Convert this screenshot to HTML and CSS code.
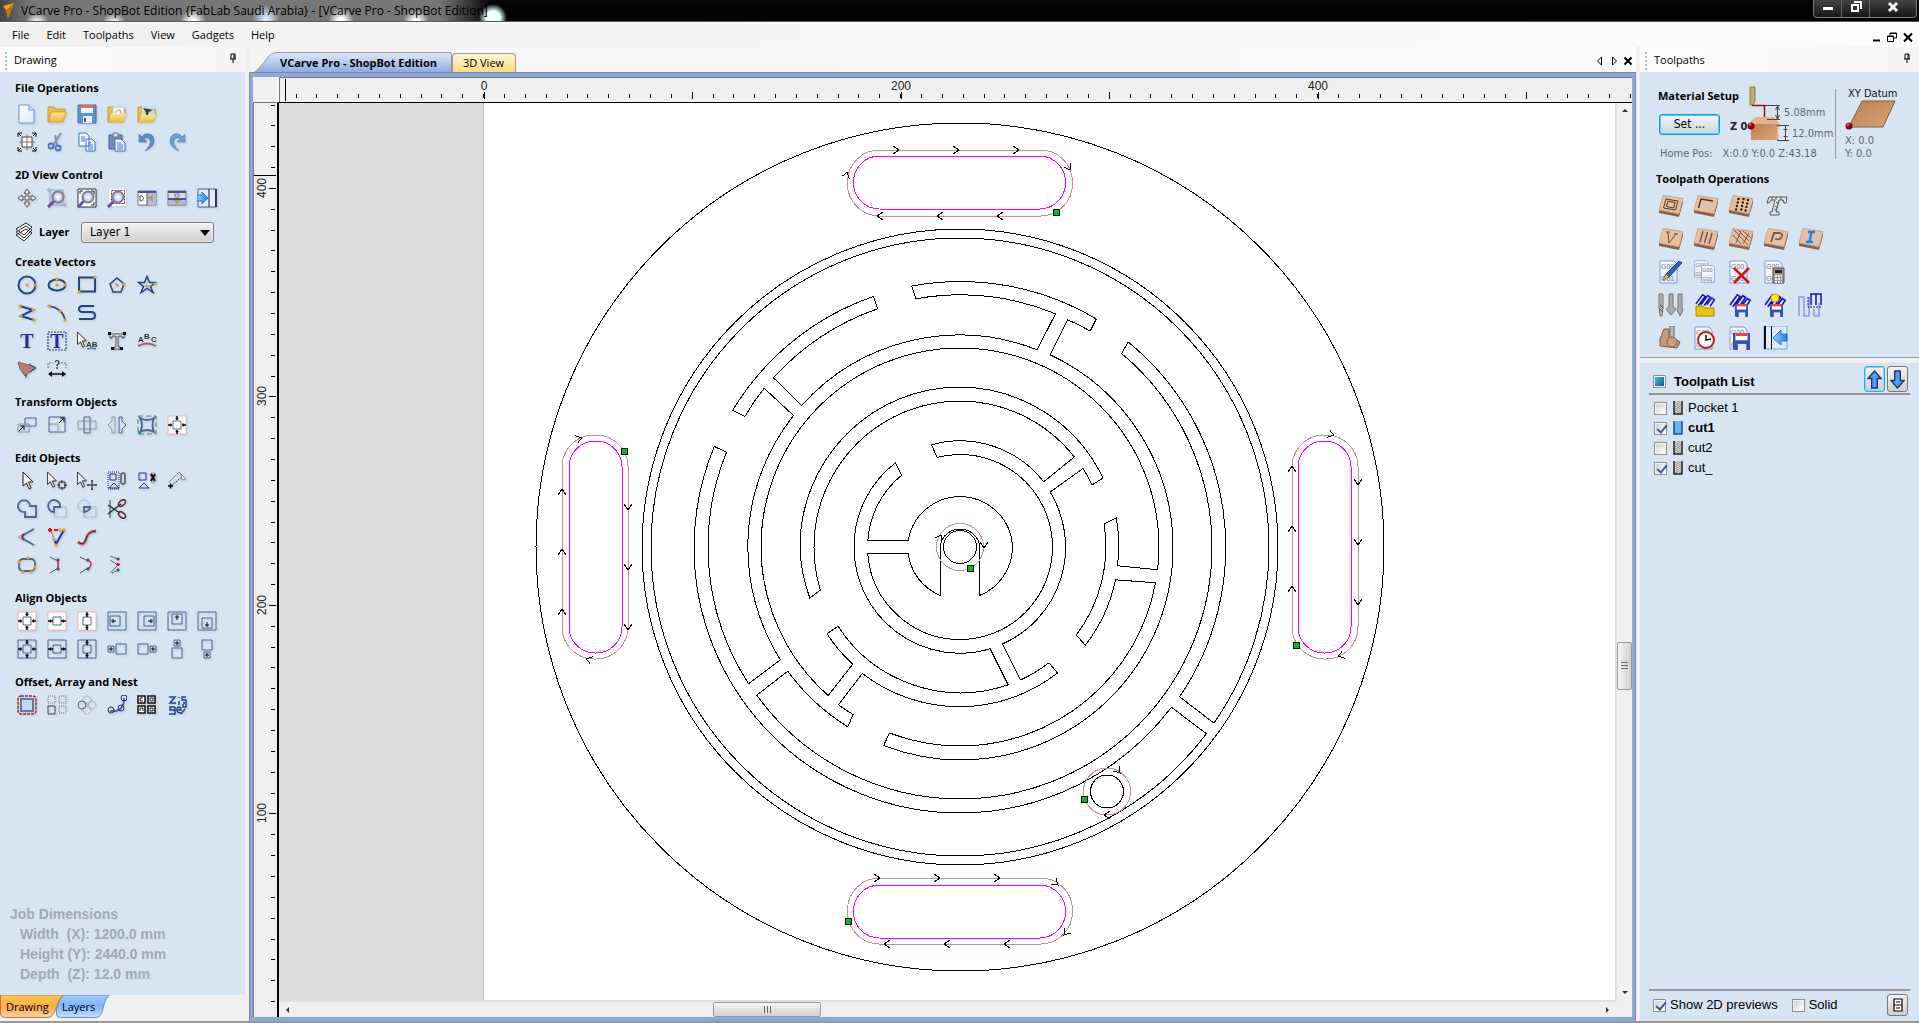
FILE: index.html
```html
<!DOCTYPE html>
<html lang="en">
<head>
<meta charset="utf-8">
<title>VCarve Pro - ShopBot Edition</title>
<link rel="stylesheet" href="styles.css">
</head>
<body>
<svg class="defs" aria-hidden="true">
  <defs>
    <linearGradient id="wood" x1="0" y1="0" x2="1" y2="1"><stop offset="0" stop-color="#b97f50"/><stop offset="1" stop-color="#dba57b"/></linearGradient>
    <linearGradient id="page" x1="0" y1="0" x2="1" y2="1"><stop offset="0" stop-color="#fff"/><stop offset="1" stop-color="#d8e9fb"/></linearGradient>
    <linearGradient id="gold" x1="0" y1="0" x2="0" y2="1"><stop offset="0" stop-color="#ffe58d"/><stop offset="1" stop-color="#eeb93a"/></linearGradient>
    <linearGradient id="blue" x1="0" y1="0" x2="1" y2="0"><stop offset="0" stop-color="#8fd0ff"/><stop offset="1" stop-color="#2a7be0"/></linearGradient>
    <radialGradient id="ball" cx=".35" cy=".3"><stop offset="0" stop-color="#f77"/><stop offset=".5" stop-color="#b80d0d"/><stop offset="1" stop-color="#700"/></radialGradient>
    <radialGradient id="lens"><stop offset="0" stop-color="#fff"/><stop offset="1" stop-color="#b5bde0"/></radialGradient>
    <symbol id="folder" viewBox="0 0 20 20"><path d="M1 3h6l2 2h9v3H4L2 18H1z" fill="#e8c057" stroke="#c79f35"/><path d="M4 8h15l-3 10H2z" fill="url(#gold)" stroke="#d9a93a"/></symbol>
    <symbol id="glass" viewBox="0 0 20 20"><path d="M7 13l-6 6" stroke="#6a49b8" stroke-width="3"/><circle cx="11" cy="9" r="5.500" fill="url(#lens)" stroke="#7d7d92" stroke-width="2"/></symbol>
    <symbol id="board" viewBox="0 0 26 24"><path d="M1 16l20 4 4-15v4l-4 14-20-4z" fill="#8d624a"/><path d="M5 1.500l20 3-4 15-20-3.500z" fill="#e6c0a2" stroke="#b98d70" stroke-width=".6"/></symbol>
    <symbol id="code" viewBox="0 0 26 24"><path d="M2 1h14l3 3v19H2z" fill="url(#page)" stroke="#7e9ad8"/><text x="3" y="9" class="gcode">G00</text><text x="3" y="21" class="gcode">G01</text></symbol>
    <symbol id="disk" viewBox="0 0 14 14"><path d="M0 0h14v14H1l-1-1z" fill="#3350b5"/><path d="M2 0h10v6H2z" fill="#fff"/><path d="M2 0h10v2.500H2z" fill="#e44"/><path d="M4 9h7v5H4z" fill="#dfe6f5"/></symbol>
    <symbol id="moves" viewBox="0 0 26 24"><path d="M1 13L9 2l3 2-8 11M7 14l8-11 3 2-7 10M14 14l6-8 3 2-5 8" stroke="#1313b8" stroke-width="1.800"/></symbol>
    <symbol id="pointer" viewBox="0 0 20 20"><path d="M6 1v14l3.500-3 2.500 6 2-1-2.500-6H16z" fill="#f4f1ea" stroke="#222" stroke-width="1"/></symbol>
    <symbol id="cross" viewBox="0 0 20 20"><path d="M10 1v4M10 15v4M1 10h4M15 10h4M8.500 3.500h3M8.500 16.500h3M3.500 8.500v3M16.500 8.500v3" stroke="#111" stroke-width="1.500"/></symbol>
    <symbol id="lr" viewBox="0 0 20 20"><path d="M1 10h5M14 10h5M3.500 8.500v3M16.500 8.500v3" stroke="#111" stroke-width="1.500"/></symbol>
    <symbol id="ud" viewBox="0 0 20 20"><path d="M10 1v5M10 14v5M8.500 3.500h3M8.500 16.500h3" stroke="#111" stroke-width="1.500"/></symbol>
    <symbol id="pin" viewBox="0 0 8 10"><path d="M1 6h6M2 6V1h4v5M5 1v5M4 6v4" stroke="#000" fill="none"/></symbol>
    <symbol id="cutter" viewBox="0 0 10 14"><path d="M1 0v13h8V0" fill="#d0d0d0" stroke="#222" stroke-width="1.500"/><path d="M3 1v12M5 0v12M7 1v12" stroke="#777" stroke-dasharray="1 1"/></symbol>
    <g id="ar"><path d="M-6-4l6 4-6 4"/></g>
    <g id="start"><path d="M-3-3h6v6h-6z" fill="#00c010" stroke="#000"/></g>
  </defs>
</svg>
<div class="app">
  <header class="titlebar">
    <svg class="logo" viewBox="0 0 12 16"><path d="M0 3L11 0 5 15 3 7z" fill="#f4a31f"/><path d="M3 7l8-7-6 15z" fill="#c77408"/></svg>
    <h1>VCarve Pro - ShopBot Edition {FabLab Saudi Arabia} - [VCarve Pro - ShopBot Edition]</h1>
    <div class="winctl">
      <button aria-label="Minimize"><svg viewBox="0 0 12 12"><path d="M1 6h10v3H1z" fill="#fff"/></svg></button>
      <button aria-label="Restore"><svg viewBox="0 0 12 12"><path d="M4 1h7v7M2 4h6v6H2z" fill="none" stroke="#fff" stroke-width="2"/></svg></button>
      <button class="wide" aria-label="Close"><svg viewBox="0 0 12 12"><path d="M2 2l8 8M10 2l-8 8" stroke="#fff" stroke-width="3"/></svg></button>
    </div>
  </header>
  <nav class="menubar">
    <button>File</button><button>Edit</button><button>Toolpaths</button><button>View</button><button>Gadgets</button><button>Help</button>
    <div class="mdictl">
      <button aria-label="Minimize drawing"><svg viewBox="0 0 10 10"><path d="M2 8.500h7" stroke="#000" stroke-width="2"/></svg></button>
      <button aria-label="Restore drawing"><svg viewBox="0 0 10 10"><path d="M3 3.500V1h6.500v5H7M.5 4H6.500v5.500H.5zM3 1.500h6M.5 4.500h6" fill="none" stroke="#000"/></svg></button>
      <button aria-label="Close drawing"><svg viewBox="0 0 10 10"><path d="M1 1.500l8 8M9 1.500l-8 8" stroke="#000" stroke-width="2"/></svg></button>
    </div>
  </nav>
  <main class="work">
    <aside class="side left">
      <div class="dock"><span>Drawing</span><svg class="pin"><use href="#pin"/></svg></div>
      <div class="panel drawing">
        <h2>File Operations</h2>
        <div class="tools first">
          <button title="New"><svg viewBox="0 0 20 20"><path d="M2 1h10l5 5v13H2z" fill="url(#page)" stroke="#6f9bcf"/><path d="M12 1v5h5" fill="#cfe2f7" stroke="#6f9bcf"/></svg></button>
          <button title="Open"><svg><use href="#folder"/></svg></button>
          <button title="Save"><svg viewBox="0 0 20 20"><path d="M1 1h18v18H1z" fill="#5b93cf" stroke="#4674ad"/><path d="M4 1h12v8H4z" fill="#eef3fa"/><path d="M4 1h12v3H4z" fill="#ea6d5b"/><path d="M6 12h9v7H6z" fill="#e8eef6"/><path d="M7 14h2v4H7z" fill="#456"/></svg></button>
          <button title="Import vectors"><svg viewBox="0 0 20 20"><use href="#folder" width="20" height="20"/><path d="M6 3h11v6l-2 3H6z" fill="#f4f8fc" stroke="#b9c4d0"/><path d="M8 9q2-4 5-3 2 2 0 5" stroke="#999"/><path d="M4 10h15l-3 8H2z" fill="url(#gold)"/></svg></button>
          <button title="Import bitmap"><svg viewBox="0 0 20 20"><use href="#folder" width="20" height="20"/><path d="M5 2h12v8H5z" fill="#bfe0ec"/><path d="M6 4l6 1 4 1-4 2-2 5-2-6z" fill="#4a4034"/><path d="M4 11h15l-3 7H2z" fill="url(#gold)"/></svg></button>
        </div>
        <div class="tools">
          <button title="Job size"><svg viewBox="0 0 20 20"><path d="M5 5h10v10H5z" fill="#fff" stroke="#444"/><path d="M10 2v16M2 10h16" stroke="#777"/><path d="M1 5V1h4M15 1h4v4M19 15v4h-4M5 19H1v-4M1 1l3 3M19 1l-3 3M19 19l-3-3M1 19l3-3" stroke="#111" stroke-width="1"/></svg></button>
          <button title="Cut"><svg viewBox="0 0 20 20"><path d="M6 13L14 1M10 14L8 3" stroke="#8997a8" stroke-width="2"/><circle cx="4" cy="14" r="2.500" stroke="#4478b8" stroke-width="1.800"/><circle cx="11" cy="16" r="2.500" stroke="#4478b8" stroke-width="1.800"/></svg></button>
          <button title="Copy"><svg viewBox="0 0 20 20"><path d="M2 1h7l3 3v10H2zM9 7h6l3 3v9H9z" fill="#edf5ff" stroke="#3e78c4"/><path d="M4 5h4M4 7h4M4 9h4M11 11h3M11 13h5M11 15h5M11 17h5" stroke="#3e78c4"/></svg></button>
          <button title="Paste"><svg viewBox="0 0 20 20"><path d="M2 3h13v14H2z" fill="#7287c6" stroke="#4c5fa0"/><path d="M6 1h5v4H6z" fill="#ddd" stroke="#777"/><path d="M8 7h6l4 4v8H8z" fill="#edf5ff" stroke="#3e78c4"/><path d="M10 11h4M10 13h6M10 15h6M10 17h6" stroke="#3e78c4"/></svg></button>
          <button title="Undo"><svg viewBox="0 0 20 20"><path d="M2 2v8h8l-3-3q4-3 6 1t-5 11q9-4 9-10T12 2 5 5z" fill="#6289c4" stroke="#4a70ab" stroke-width=".6"/></svg></button>
          <button title="Redo"><svg viewBox="0 0 20 20"><path d="M18 2v8h-8l3-3q-4-3-6 1t5 11q-9-4-9-10T8 2t7 3z" fill="#6f9fcd" stroke="#4f86b5" stroke-width=".6"/></svg></button>
        </div>
        <h2>2D View Control</h2>
        <div class="tools">
          <button title="Pan"><svg viewBox="0 0 20 20"><path d="M10 1l3 4h-2v4h4V7l4 3-4 3v-2h-4v4h2l-3 4-3-4h2v-4H5v2l-4-3 4-3v2h4V5H7z" fill="#eee" stroke="#555" stroke-width="1"/></svg></button>
          <button title="Zoom"><svg viewBox="0 0 20 20"><path d="M2 0v4M0 2h16v14M18 15v4M16 17h4M3 3v14h14" stroke="#8da0bd"/><use href="#glass" width="20" height="20"/></svg></button>
          <button title="Zoom all"><svg viewBox="0 0 20 20"><path d="M1 1h18v18H1z" fill="#fff" stroke="#333"/><path d="M3 6V3h3M14 3h3v3M17 14v3h-3" stroke="#222"/><use href="#glass" width="20" height="20"/></svg></button>
          <button title="Zoom selected"><svg viewBox="0 0 20 20"><path d="M2 1h17v17H2z" fill="#fff"/><path d="M4.500 2.500h13v13h-13z" stroke="#8b1d86" stroke-dasharray="2 1"/><use href="#glass" width="20" height="20"/></svg></button>
          <button title="Tile vertically"><svg viewBox="0 0 20 20"><path d="M1 3h18v14H1z" fill="#fff" stroke="#777"/><path d="M1 3h18v2H1z" fill="#345b9c"/><path d="M10 5h9v11h-9z" fill="#b6b9f0"/><path d="M11 10l3-2 2-2v8l-2-2z" fill="#c99c2d"/><path d="M3 8h2l2 2-2 3H3z" stroke="#555"/><path d="M10 5v12" stroke="#555"/></svg></button>
          <button title="Tile horizontally"><svg viewBox="0 0 20 20"><path d="M1 3h18v14H1z" fill="#ddd" stroke="#777"/><path d="M1 3h18v2H1zM1 10h18v2H1z" fill="#345b9c"/><path d="M2 12h16v4H2z" fill="#b6b9f0"/><path d="M6 12h8l-4 4z" fill="#c99c2d"/><path d="M8 6h4v3H8z" stroke="#777"/></svg></button>
          <button title="Dock panel"><svg viewBox="0 0 20 20"><path d="M1 1h18v18H1z" fill="#dfeafa" stroke="#3e6aa8"/><path d="M12 1v18" stroke="#223"/><path d="M18 1h2v18h-2z" fill="#335"/><path d="M0 7h5V4l6 6-6 6v-3H0z" fill="url(#blue)" stroke="#2577d8"/></svg></button>
        </div>
        <div class="layer">
          <svg viewBox="0 0 20 20"><path d="M1 13l8 6 8-8-6-4zM1 10l8 6 8-8-6-4zM1 7l8 6 8-8-6-4z" fill="#fff" stroke="#222"/></svg>
          <label for="layer">Layer</label>
          <select id="layer"><option>Layer 1</option></select>
        </div>
        <h2>Create Vectors</h2>
        <div class="tools v">
          <button title="Circle"><svg viewBox="0 0 20 20"><circle cx="10" cy="10" r="8.500"/><path class="node" d="M9 9h2v2H9zM17 9h2v2h-2z"/></svg></button>
          <button title="Ellipse"><svg viewBox="0 0 20 20"><ellipse cx="10" cy="10" rx="8.500" ry="5.500"/><path class="node" d="M9 9h2v2H9zM17 9h2v2h-2zM9 3h2v2H9z"/></svg></button>
          <button title="Rectangle"><svg viewBox="0 0 20 20"><path d="M2 2.500h16v14H2z"/><path class="node" d="M17 1h2v2h-2zM1 16h2v2H1z"/></svg></button>
          <button title="Polygon"><svg viewBox="0 0 20 20"><path d="M10 3l7 6-3 8H6L3 9z" stroke-width="1.500"/><path class="node" d="M9 9h2v2H9zM16 8h2v2h-2z"/></svg></button>
          <button title="Star"><svg viewBox="0 0 20 20"><path d="M10 1.500l2.500 6h6l-5 4 2.500 6-6-4-6 4 2.500-6-5-4h6z" stroke-width="1.500"/><path class="node" d="M9 10h2v2H9zM17 8h2v2h-2z"/></svg></button>
        </div>
        <div class="tools v">
          <button title="Polyline"><svg viewBox="0 0 20 20"><path d="M3 3l13 4L4 13l13 4"/><path class="node" d="M2 2h2v2H2zM15 6h2v2h-2zM3 12h2v2H3zM16 16h2v2h-2z"/></svg></button>
          <button title="Arc"><svg viewBox="0 0 20 20"><path d="M2 3Q15 5 18 16" stroke-width="1.500"/><path class="node" d="M1 2h2v2H1zM12 7h2v2h-2zM17 16h2v2h-2z"/></svg></button>
          <button title="Curve"><svg viewBox="0 0 20 20"><path d="M17 3H6q-4 0-4 3t4 3h8q4 0 4 3.500t-4 3.500H2"/></svg></button>
        </div>
        <div class="tools v">
          <button title="Text"><svg viewBox="0 0 20 20"><text x="10" y="17" class="tee">T</text></svg></button>
          <button title="Text in box"><svg viewBox="0 0 20 20"><path d="M1 1h18v18H1z" stroke-width="1.200" stroke-dasharray="2 1"/><text x="10" y="17" class="tee">T</text></svg></button>
          <button title="Edit text"><svg viewBox="0 0 20 20"><use href="#pointer" x="-5" y="0" width="18" height="18"/><text x="9" y="16" class="ab">AB</text><path d="M10 18q4-2 9 0" stroke-width="1"/></svg></button>
          <button title="Convert text"><svg viewBox="0 0 20 20"><path d="M3 3h14v4h-2V5h-4v11h2v2H7v-2h2V5H5v2H3z" fill="#fff" stroke="#444" stroke-width="1"/><path d="M1 1h3v3H1zM16 1h3v3h-3zM4 16h3v3H4zM13 16h3v3h-3z" fill="#111" stroke="none"/></svg></button>
          <button title="Text on curve"><svg viewBox="0 0 20 20"><text x="1" y="11" class="ab">A</text><text x="7" y="8" class="ab">B</text><text x="14" y="11" class="ab">C</text><path d="M1 15q9-5 18 0" stroke="#a05d69"/></svg></button>
        </div>
        <div class="tools v">
          <button title="Trace bitmap"><svg viewBox="0 0 20 20"><path d="M1 3l7 2 4 1 7 3-5 3-6 5-5-7z" fill="#b87d78" stroke="#756d6a" stroke-width="1"/><path d="M12 5l7 4-6 4M9 15v4" stroke="#333" stroke-width="1"/></svg></button>
          <button title="Dimension"><svg viewBox="0 0 20 20"><path d="M1 9V4h5M14 4h5v5" stroke="#777" stroke-width="1" stroke-dasharray="2 1"/><path d="M2 15h16" stroke="#111" stroke-width="1.500"/><path d="M1 15l4-3v6zM19 15l-4-3v6z" fill="#111" stroke="none"/><path d="M8 3q2-3 4 0 0 2-2 3v1M10 8v2" stroke="#222" stroke-width="1.200"/></svg></button>
        </div>
        <h2>Transform Objects</h2>
        <div class="tools t">
          <button title="Move"><svg viewBox="0 0 20 20"><path d="M8 3h11v8H8z"/><path d="M1 9h11v8H1z" stroke="#9099a5"/><path d="M2 16l5-5M7 15v-4H3" stroke="#111"/></svg></button>
          <button title="Size"><svg viewBox="0 0 20 20"><path d="M2 2h16v15H2z"/><path d="M2 9h9v8" stroke="#9099a5"/><path d="M12 8l5-5M13 3h4v4" stroke="#111"/></svg></button>
          <button title="Rotate"><svg viewBox="0 0 20 20"><path d="M1 6h18v8H1z" stroke="#9099a5"/><path d="M7 2h6v16H7z"/></svg></button>
          <button title="Mirror"><svg viewBox="0 0 20 20"><path d="M8 2v16H5v-4l-4-4 4-4V2z" stroke="#9099a5"/><path d="M12 2v16h3v-4l4-4-4-4V2z"/></svg></button>
          <button title="Distort"><svg viewBox="0 0 20 20"><path d="M1 1h18v18H1z" stroke="#777" stroke-dasharray="5 3"/><path d="M3 3q7 4 14 0-3 7 0 14-7-4-14 0 4-7 0-14z" stroke-width="1.800"/><path d="M1 16h3v3H1z" fill="#2a4" stroke="none"/></svg></button>
          <button title="Align"><svg viewBox="0 0 20 20"><path d="M1 1h18v18H1z" class="pink"/><path d="M6 6h8v8H6z"/><use href="#cross" width="20" height="20"/></svg></button>
        </div>
        <h2>Edit Objects</h2>
        <div class="tools t">
          <button title="Select"><svg><use href="#pointer"/></svg></button>
          <button title="Node edit"><svg viewBox="0 0 20 20"><use href="#pointer" x="-5" width="18" height="18"/><path d="M12 11h6v6h-6zM15 9v3M15 16v3M10 14h3M17 14h3" stroke="#222"/></svg></button>
          <button title="Transform"><svg viewBox="0 0 20 20"><use href="#pointer" x="-5" width="18" height="18"/><path d="M15 9v10M10 14h10M14 10h2M14 18h2M11 13v2M19 13v2" stroke="#222"/></svg></button>
          <button title="Group"><svg viewBox="0 0 20 20"><path d="M1 1h11v17H1z" stroke="#333" stroke-dasharray="1 1"/><path d="M3 3h6v6H3zM7 12l5 5H2z" stroke="#2b2b9c"/><rect x="14" y="2" width="4" height="11" rx="2" stroke="#555" stroke-width="1.500"/></svg></button>
          <button title="Ungroup"><svg viewBox="0 0 20 20"><path d="M2 2h7v7H2zM7 12l5 5H2z" stroke="#2b2b9c"/><rect x="13" y="1" width="6" height="11" rx="3" fill="#bbb" stroke="none"/><path d="M14 3l4 7M18 3l-4 7" stroke="#111" stroke-width="2"/></svg></button>
          <button title="Measure"><svg viewBox="0 0 20 20"><path d="M2 11L12 1l2 2" stroke="#888"/><path d="M4 15L16 5" stroke="#22c" stroke-dasharray="2 1"/><path d="M1 15h5M3.500 12.500v5" stroke="#111" stroke-width="1.500"/><path d="M14 3l5 5-4 1z" fill="#fff" stroke="#888"/></svg></button>
        </div>
        <div class="tools t">
          <button title="Weld"><svg viewBox="0 0 20 20"><path d="M8 13A6 6 0 1 1 13 7h6v11H8z" stroke-width="1.800"/></svg></button>
          <button title="Subtract"><svg viewBox="0 0 20 20"><path d="M7 8h12v10H7z" stroke="#a9bcd4"/><path d="M7 13A6 6 0 1 1 13 8H7z" stroke-width="1.800"/></svg></button>
          <button title="Intersect"><svg viewBox="0 0 20 20"><path d="M7 8h12v10H7z" stroke="#a9bcd4"/><circle cx="7" cy="7" r="6" stroke="#a9bcd4"/><path d="M7 8h6q0 4-6 5z" stroke-width="1.800"/></svg></button>
          <button title="Trim"><svg viewBox="0 0 20 20"><path d="M3 1v18" stroke="#446"/><path d="M1 6l12 8M1 15L14 5" stroke="#333" stroke-width="1.500"/><ellipse cx="15" cy="4" rx="4" ry="2.500" transform="rotate(-40 15 4)" stroke="#5a2e35" stroke-width="1.500"/><ellipse cx="15" cy="16" rx="4" ry="2.500" transform="rotate(40 15 16)" stroke="#5a2e35" stroke-width="1.500"/></svg></button>
        </div>
        <div class="tools t">
          <button title="Fillet"><svg viewBox="0 0 20 20"><path d="M8 6l-7 4 7 4" stroke="#999"/><path d="M17 2L8 7q-5 3 0 6l9 5" stroke-width="1.800"/><path d="M7 7q-4 3 0 6" stroke="#a12" stroke-width="1.500"/></svg></button>
          <button title="Close vector"><svg viewBox="0 0 20 20"><path d="M4 4l4 10" stroke="#e22" stroke-dasharray="3 1"/><path d="M8 14l1 3 8-14" stroke="#2b2b9c" stroke-width="2"/><path d="M3 1v4M1 3h4M7 3h4" stroke="#e11" stroke-width="2"/><path class="node" d="M12 2h2v2h-2zM16 2h2v2h-2zM6 12h2v2H6zM8 17h2v2H8z"/></svg></button>
          <button title="Fit curves"><svg viewBox="0 0 20 20"><path d="M1 15q6 5 8-3t10-8" stroke="#d07070" stroke-width="3"/><path d="M1 15q6 5 8-3t10-8" stroke="#222"/></svg></button>
        </div>
        <div class="tools t">
          <button title="Node path"><svg viewBox="0 0 20 20"><rect x="2" y="4" width="16" height="12" rx="4" stroke-width="1.800"/><path class="node" d="M1 6h2v2H1zM10 2h2v2h-2zM17 11h2v2h-2zM5 16h2v2H5zM13 16h2v2h-2z"/></svg></button>
          <button title="Line span"><svg viewBox="0 0 20 20"><path d="M3 2l8 4M3 18l8-5" stroke="#555"/><path d="M11 5v9" stroke="#d22" stroke-width="1.500"/><path d="M10 4h2v2h-2zM10 13h2v2h-2z" fill="#111"/></svg></button>
          <button title="Arc span"><svg viewBox="0 0 20 20"><path d="M3 2l8 4M3 18l8-5" stroke="#555"/><path d="M11 5q6 4 0 9" stroke="#d22" stroke-width="1.500"/><path d="M10 4h2v2h-2zM10 13h2v2h-2z" fill="#111"/></svg></button>
          <button title="Insert node"><svg viewBox="0 0 20 20"><path d="M11 4L3 1M3 5l8 5-8 8M11 15l-6 3" stroke="#666"/><path d="M11 8v3M9 9.500h4" stroke="#e11" stroke-width="1.500"/><path d="M10 3h2v2h-2zM10 14h2v2h-2z" fill="#111"/></svg></button>
        </div>
        <h2>Align Objects</h2>
        <div class="tools t">
          <button title="Centre in material"><svg viewBox="0 0 20 20"><path d="M1 1h18v18H1z" class="pink"/><path d="M6 6h8v8H6z"/><use href="#cross" width="20" height="20"/></svg></button>
          <button title="Centre X in material"><svg viewBox="0 0 20 20"><path d="M1 1h18v18H1z" class="pink"/><path d="M6 6h8v8H6z"/><use href="#lr" width="20" height="20"/></svg></button>
          <button title="Centre Y in material"><svg viewBox="0 0 20 20"><path d="M1 1h18v18H1z" class="pink"/><path d="M6 6h8v8H6z"/><use href="#ud" width="20" height="20"/></svg></button>
          <button title="Left inside"><svg viewBox="0 0 20 20"><path d="M1 1h18v18H1zM3 5h10v10H3z"/><path d="M4 10h5M6 8v4" stroke="#111"/></svg></button>
          <button title="Right inside"><svg viewBox="0 0 20 20"><path d="M1 1h18v18H1zM7 5h10v10H7z"/><path d="M11 10h5M14 8v4" stroke="#111"/></svg></button>
          <button title="Top inside"><svg viewBox="0 0 20 20"><path d="M1 1h18v18H1zM5 3h10v10H5z"/><path d="M10 4v5M8 6h4" stroke="#111"/></svg></button>
          <button title="Bottom inside"><svg viewBox="0 0 20 20"><path d="M1 1h18v18H1zM5 7h10v10H5z"/><path d="M10 11v5M8 14h4" stroke="#111"/></svg></button>
        </div>
        <div class="tools t">
          <button title="Centre"><svg viewBox="0 0 20 20"><path d="M1 1h18v18H1zM6 6h8v8H6z"/><use href="#cross" width="20" height="20"/></svg></button>
          <button title="Centre X"><svg viewBox="0 0 20 20"><path d="M1 1h18v18H1zM6 6h8v8H6z"/><use href="#lr" width="20" height="20"/></svg></button>
          <button title="Centre Y"><svg viewBox="0 0 20 20"><path d="M1 1h18v18H1zM6 6h8v8H6z"/><use href="#ud" width="20" height="20"/></svg></button>
          <button title="Left outside"><svg viewBox="0 0 20 20"><path d="M1 7h6v6H1zM9 5h10v10H9z"/><path d="M2 10h4M4 8v4" stroke="#111"/></svg></button>
          <button title="Right outside"><svg viewBox="0 0 20 20"><path d="M13 7h6v6h-6zM1 5h10v10H1z"/><path d="M14 10h4M16 8v4" stroke="#111"/></svg></button>
          <button title="Top outside"><svg viewBox="0 0 20 20"><path d="M7 1h6v6H7zM5 9h10v10H5z"/><path d="M10 2v4M8 4h4" stroke="#111"/></svg></button>
          <button title="Bottom outside"><svg viewBox="0 0 20 20"><path d="M7 13h6v6H7zM5 1h10v10H5z"/><path d="M10 14v4M8 16h4" stroke="#111"/></svg></button>
        </div>
        <h2>Offset, Array and Nest</h2>
        <div class="tools t">
          <button title="Offset"><svg viewBox="0 0 20 20"><rect x="1" y="1" width="18" height="18" rx="3" stroke="#c11d2b" stroke-width="1.500" stroke-dasharray="3 1"/><path d="M4 4h12v12H4z" fill="#c3d9f2" stroke="#5a7ba8" stroke-width="2"/></svg></button>
          <button title="Array"><svg viewBox="0 0 20 20"><path d="M1 1h7v7H1zM12 1h7v7h-7zM12 11h7v7h-7z" stroke="#777" stroke-dasharray="1 1"/><path d="M1 11h7v8H1z" stroke="#444"/></svg></button>
          <button title="Circular array"><svg viewBox="0 0 20 20"><g stroke="#888" stroke-dasharray="1 1"><circle cx="10" cy="5" r="4"/><circle cx="15" cy="10" r="4"/><circle cx="10" cy="15" r="4"/></g><circle cx="5" cy="10" r="4" stroke="#666"/></svg></button>
          <button title="Copy along"><svg viewBox="0 0 20 20"><path d="M3 16q14 2 14-13" stroke="#55d" stroke-width="1.800"/><circle cx="4" cy="15" r="3" stroke="#333"/><circle cx="14" cy="13" r="3" stroke="#333"/><circle cx="17" cy="3" r="3" stroke="#333"/></svg></button>
          <button title="Plate layout"><svg viewBox="0 0 20 20"><path d="M1 1h7v7H1zM11 1h7v7h-7zM1 11h7v7H1zM11 11h7v7h-7z" fill="#fff" stroke="#111" stroke-width="1.500"/><path d="M6 3H3v3h3M13 3v3h3V3zM3 16v-3h3v3M13 13h3v3h-3z" stroke="#222"/></svg></button>
          <button title="Nest"><svg viewBox="0 0 20 20"><path d="M2 2h6L3 8h6M12 6v4M12 2v1M19 2h-4v3h4v3h-3M8 12H3v3h5v4H2M8 12v6M10 15h4q0-3-2-3t-2 3 4 3M16 9v3h3V9M14 19l4-5" stroke="#24467c" stroke-width="1.500"/></svg></button>
        </div>
        <dl class="job">
          <dt>Job Dimensions</dt>
          <dd>Width&nbsp; (X): 1200.0 mm</dd><dd>Height (Y): 2440.0 mm</dd><dd>Depth&nbsp; (Z): 12.0 mm</dd>
        </dl>
      </div>
      <div class="sidetabs"><button class="on"><svg viewBox="0 0 64 23" preserveAspectRatio="none"><defs><linearGradient id="og" x2="0" y2="1"><stop offset="0" stop-color="#fdc94f"/><stop offset=".5" stop-color="#ffaa45"/><stop offset="1" stop-color="#ffd0a4"/></linearGradient></defs><path d="M.5 0v18q0 4.500 5 4.500h42q5 0 8-8Q59 3 63.500 0z" fill="url(#og)" stroke="#b87b3e"/></svg><span>Drawing</span></button><button class="off"><svg viewBox="0 0 54 23" preserveAspectRatio="none"><defs><linearGradient id="bg" x2="0" y2="1"><stop offset="0" stop-color="#a3c9f7"/><stop offset=".5" stop-color="#7db4fc"/><stop offset="1" stop-color="#c9e0ff"/></linearGradient></defs><path d="M7 0Q3 5 .5 12v7q0 3.500 4 3.500h35q5 0 7-7Q49 3 53.500 0z" fill="url(#bg)" stroke="#5a8fd0"/></svg><span>Layers</span></button></div>
    </aside>

    <section class="doc">
      <div class="tabs">
        <button class="tab active"><svg viewBox="0 0 26 20"><defs><linearGradient id="tg" x2="0" y2="1"><stop offset="0" stop-color="#e0e9fb"/><stop offset="1" stop-color="#8eaae4"/></linearGradient></defs><path d="M0 20Q3 19 7 14l8-10q3-3.500 8-3.500h3V20z" fill="url(#tg)"/><path d="M0 20Q3 19 7 14l8-10q3-3.500 8-3.500h3" fill="none" stroke="#9a9a9a"/></svg><span>VCarve Pro - ShopBot Edition</span></button><button class="tab">3D View</button>
        <div class="tabnav">
          <button aria-label="Previous tab"><svg viewBox="0 0 10 10"><path d="M6.500 1v8l-4-4z" fill="none" stroke="#000"/></svg></button><button aria-label="Next tab"><svg viewBox="0 0 10 10"><path d="M3.500 1v8l4-4z" fill="none" stroke="#000"/></svg></button><button aria-label="Close tab"><svg viewBox="0 0 10 10"><path d="M1.500 1.500l7 7M8.500 1.500l-7 7" stroke="#000" stroke-width="2"/></svg></button>
        </div>
      </div>
      <div class="frame">
        <div class="corner"></div>
        <svg class="hruler" role="img" aria-label="Horizontal ruler">
          <path d="M15.500 18H1353" stroke-width="4" stroke-dasharray="1 19.850"/>
          <path d="M203.500 17H1353" stroke-width="7" stroke-dasharray="1 207.500"/>
          <path d="M5.500 1v22"/>
          <g class="num"><text x="204" y="12">0</text><text x="621" y="12">200</text><text x="1038" y="12">400</text></g>
        </svg>
        <svg class="vruler" role="img" aria-label="Vertical ruler">
          <path d="M19 1.500V912" stroke-width="4" stroke-dasharray="1 19.850"/>
          <path d="M18 84.500V912" stroke-width="7" stroke-dasharray="1 207.500"/>
          <path d="M0 72.500h22"/>
          <g class="num"><text transform="translate(12 85) rotate(-90)">400</text><text transform="translate(12 293) rotate(-90)">300</text><text transform="translate(12 502) rotate(-90)">200</text><text transform="translate(12 710) rotate(-90)">100</text></g>
        </svg>
        <div class="view">
          <svg class="canvas" viewBox="-681 -444 1336 898" preserveAspectRatio="xMinYMin meet" role="img" aria-label="Labyrinth drawing">
            <path d="M-477-444H655V453H-477z" fill="#fff"/><path d="M-476.500-444V453" stroke="#bbb"/>
            <g class="ink">
              <circle r="424"/><circle r="318"/><circle r="16.500"/><circle cx="147" cy="244.500" r="16.500"/>
              <path d="M-86.500-250.500L-82.400-238.200A252 252 0 0 0-186.500-169.200L-158.400-141.500A212 212 0 0 1 77.100-197.200L95.500-233.200A252 252 0 0 0-44.100-248.200L-48.200-261A266 266 0 0 1 136.300-228L130.200-216A252 252 0 0 0 107.800-227.200L90.200-192.200A213 213 0 0 1 213 0A213 213 0 0 1 0 213A213 213 0 0 1-76.300 198.500L-70.600 186A199 199 0 0 0 0 199A199 199 0 0 0 195.500 35.800L155.500 32.800A159 159 0 0 1 125.300 98.200L116.300 88A146 146 0 0 0 144-23L156.300-29.200A159 159 0 0 1 157.500 18.800L197.600 22.800A199 199 0 0 0 0-199A199 199 0 0 0-199 0A199 199 0 0 0-131.800 148.500L-107.300 117.200A159 159 0 0 1-133 86.800L-122 79.200A146 146 0 0 0 48.200 137.800L30.200 101.800A106 106 0 0 1-106 0A106 106 0 0 1-64.500-84.200L-58.400-71.800A92.500 92.500 0 0 0-92.200-6.200H-51.800A52.500 52.500 0 0 1 52.500 0A52.500 52.500 0 0 1 19.600 48.500V-2A20 20 0 0 0-19.600-2V48.500A52.500 52.500 0 0 1-51.800 6.800H-92.200A92.500 92.500 0 0 0 0 92.500A92.500 92.500 0 0 0 92.500 0A92.500 92.500 0 0 0-22.900-89.600L-28.600-102.200A106 106 0 0 1 83.700-65.200L114.300-90A146 146 0 0 0 0-146A146 146 0 0 0-146 0A146 146 0 0 0-139.600 43.200L-150.200 51A160 160 0 0 1-160 0A160 160 0 0 1 0-160A160 160 0 0 1 143-69L132-62A146 146 0 0 0 123-78.500L90.200-55A106 106 0 0 1 42.400 97L60.400 133A146 146 0 0 0 89 115.800L97.500 126A159 159 0 0 1-97.600 126.500L-121.600 157.800A199 199 0 0 0-106.900 167.500L-112.200 179.800A212 212 0 0 1-172.200 124.200L-203.300 148.200A252 252 0 0 0 0 252A252 252 0 0 0 252 0A252 252 0 0 0 161.600-193.500L168.200-205A265 265 0 0 1 219.600 149.800L253.900 176.100A309 309 0 0 0 309 0A309 309 0 0 0 0-309A309 309 0 0 0-309 0A309 309 0 0 0 0 309A309 309 0 0 0 246.400 186.800L211.400 160.200A266 266 0 0 1 0 266A266 266 0 0 1-266 0A266 266 0 0 1-245.700-100.500L-233.500-94.800A252 252 0 0 0-211.400 136.800L-179.600 112.800A212 212 0 0 1-166.500-131.500L-195.900-158.800A252 252 0 0 0-215.100-130.500L-227.300-136.800A265.500 265.500 0 0 1-86.500-250.500z"/>
            </g>
            <g class="cut">
              <rect x="-112.500" y="-397" width="225" height="66" rx="32"/><rect x="-112.500" y="331" width="225" height="66" rx="32"/>
              <rect x="-398" y="-112" width="66" height="224" rx="32"/><rect x="332" y="-112" width="66" height="224" rx="32"/>
              <circle r="23.500"/><circle cx="147" cy="244.500" r="23.500"/>
            </g>
            <g class="sel">
              <rect x="-106.500" y="-391" width="212" height="53" rx="26"/><rect x="-106.500" y="338" width="212" height="53" rx="26"/>
              <rect x="-391" y="-106" width="53" height="212" rx="26"/><rect x="338" y="-106" width="53" height="212" rx="26"/>
            </g>
            <g class="ink">
              <use href="#ar" transform="translate(-61 -397)"/><use href="#ar" transform="translate(-1 -397)"/><use href="#ar" transform="translate(59 -397)"/>
              <use href="#ar" transform="translate(-83 -331) rotate(180)"/><use href="#ar" transform="translate(-23 -331) rotate(180)"/><use href="#ar" transform="translate(37 -331) rotate(180)"/>
              <use href="#ar" transform="translate(-113 -375) rotate(-75)"/><use href="#ar" transform="translate(110 -377) rotate(60)"/>
              <use href="#ar" transform="translate(-378 -109) rotate(-15)"/><use href="#ar" transform="translate(-398 -58) rotate(-90)"/><use href="#ar" transform="translate(-398 2) rotate(-90)"/><use href="#ar" transform="translate(-398 62) rotate(-90)"/>
              <use href="#ar" transform="translate(-332 -37) rotate(90)"/><use href="#ar" transform="translate(-332 23) rotate(90)"/><use href="#ar" transform="translate(-332 83) rotate(90)"/><use href="#ar" transform="translate(-374 112) rotate(-165)"/>
              <use href="#ar" transform="translate(332 -81) rotate(-90)"/><use href="#ar" transform="translate(332 -21) rotate(-90)"/><use href="#ar" transform="translate(332 39) rotate(-90)"/><use href="#ar" transform="translate(374 -112) rotate(15)"/>
              <use href="#ar" transform="translate(398 -62) rotate(90)"/><use href="#ar" transform="translate(398 -2) rotate(90)"/><use href="#ar" transform="translate(398 58) rotate(90)"/><use href="#ar" transform="translate(378 109) rotate(165)"/>
              <use href="#ar" transform="translate(-80 331)"/><use href="#ar" transform="translate(-20 331)"/><use href="#ar" transform="translate(40 331)"/><use href="#ar" transform="translate(98 338) rotate(40)"/>
              <use href="#ar" transform="translate(-76 397) rotate(180)"/><use href="#ar" transform="translate(-16 397) rotate(180)"/><use href="#ar" transform="translate(44 397) rotate(180)"/><use href="#ar" transform="translate(104 388) rotate(130)"/>
              <use href="#ar" transform="translate(-19 -12) rotate(-60)"/><use href="#ar" transform="translate(24 1) rotate(90)"/><use href="#ar" transform="translate(160 226) rotate(50)"/><use href="#ar" transform="translate(144 268) rotate(180)"/>
            </g>
            <use href="#start" x="96.500" y="-334.500"/><use href="#start" x="-335.500" y="-95.500"/><use href="#start" x="336.500" y="98.500"/><use href="#start" x="-111.500" y="374.500"/><use href="#start" x="10.500" y="21.500"/><use href="#start" x="124.500" y="252.500"/>
          </svg>
          <div class="vscroll"><i class="up"></i><b></b><i class="down"></i></div>
          <div class="hscroll"><i class="back"></i><b></b><i class="fwd"></i></div>
          <div class="grip"></div>
        </div>
      </div>
    </section>

    <aside class="side right">
      <div class="dock"><span>Toolpaths</span><svg class="pin"><use href="#pin"/></svg></div>
      <div class="panel paths">
        <div class="material">
          <div class="setup">
            <h3>Material Setup</h3>
            <button class="set">Set ...</button>
            <svg class="diagram" viewBox="0 0 106 58" role="img" aria-label="Z zero and gap">
              <path d="M21 1h5v14l-2 4h-3z" fill="#c2b063" stroke="#776a2c" stroke-width=".8"/>
              <path d="M23 19.500h12.500V33" fill="none" stroke="#a00c18" stroke-width="1.500"/>
              <path d="M22 35l5-4h18l6 7-2 6 1 10H22z" fill="#e5b18c"/><path d="M22 38h26v16H22z" fill="url(#wood)"/>
              <path d="M36 19.500h15M38 33.500h13M48.500 20v13M46.500 24l2-4 2 4M46.500 29l2 4 2-4M48 39.500h12M48 54.500h12M56.500 40v14M54.500 43.500h4M54.500 50.500h4" fill="none" stroke="#444"/>
              <circle cx="22" cy="40" r="3.500" fill="url(#ball)"/>
              <text x="1" y="44" class="z">Z 0</text><text x="55" y="30">5.08mm</text><text x="63" y="51">12.0mm</text>
            </svg>
            <p class="home">Home Pos:<span>X:0.0 Y:0.0 Z:43.18</span></p>
          </div>
          <div class="datum"><p class="dark">XY Datum</p><svg viewBox="0 0 52 30"><path d="M17 1h33L38 27H4z" fill="url(#wood)" stroke="#8a5a36"/><circle cx="4" cy="26" r="3.500" fill="url(#ball)"/></svg><p>X: 0.0</p><p>Y: 0.0</p></div>
        </div>
        <h2>Toolpath Operations</h2>
        <div class="ops">
          <button title="Profile"><svg viewBox="0 0 26 24"><use href="#board" width="26" height="24"/><path d="M8 5l12 2-2.500 9-12-2zM10 7l7 1.500-1.500 5.500-7-1.500z" stroke="#4a3a30"/></svg></button>
          <button title="Pocket"><svg viewBox="0 0 26 24"><use href="#board" width="26" height="24"/><path d="M5.500 14L8 5l12 2" stroke="#4a3a30" stroke-width="1.500"/></svg></button>
          <button title="Drilling"><svg viewBox="0 0 26 24"><use href="#board" width="26" height="24"/><path d="M10.500 5L8 16M15.500 5L13 17M20 6l-2.500 11" stroke="#2e211a" stroke-width="2.500" stroke-linecap="round" stroke-dasharray="0 3.600"/></svg></button>
          <button title="Quick engrave"><svg viewBox="0 0 26 24"><path d="M6 3h18l-1 6h-2l-1-3h-4l-3 12h3v3H7v-3h2l3-12H8L6 9H4zM13 8l3 2M12 12l3 2M11 15l3 2M9 3v3M13 3v3M18 3v3" fill="#dfe6ee" stroke="#555"/></svg></button>
        </div>
        <div class="ops">
          <button title="V-carve"><svg viewBox="0 0 26 24"><use href="#board" width="26" height="24"/><path d="M8 5h4M10 5l1 11 7-9M16 7h4" stroke="#6b4733"/></svg></button>
          <button title="Fluting"><svg viewBox="0 0 26 24"><use href="#board" width="26" height="24"/><path d="M10 4L7 15M14.500 5l-3 11M19 6l-3 11" stroke="#7b5743" stroke-width="1.500"/></svg></button>
          <button title="Texture"><svg viewBox="0 0 26 24"><use href="#board" width="26" height="24"/><path d="M6 3l14 15M5 8l8 9M10 3l11 11M15 4l8 7M8 16l5-12M15 17l6-11" stroke="#7b5743"/></svg></button>
          <button title="Prism"><svg viewBox="0 0 26 24"><use href="#board" width="26" height="24"/><path d="M8 15l3-9h6q4 1 1 5-2 2-6 1" stroke="#7b5743" stroke-width="1.800"/></svg></button>
          <button title="Inlay"><svg viewBox="0 0 26 24"><use href="#board" width="26" height="24"/><path d="M10 5h7M13.500 5l-2 10M8 15h7" stroke="#1686ec" stroke-width="2.500"/></svg></button>
        </div>
        <div class="ops">
          <button title="Edit toolpath"><svg viewBox="0 0 26 24"><use href="#code" width="26" height="24"/><path d="M6 18l2-4L21 1l3 2L11 17z" fill="#3b63b8" stroke="#123a8c"/><path d="M5 20l3-6 3 3z" fill="#ffd455" stroke="#222" stroke-width=".5"/></svg></button>
          <button title="Duplicate toolpath"><svg viewBox="0 0 26 24"><use href="#code" width="20" height="18"/><use href="#code" x="7" y="4" width="20" height="20"/></svg></button>
          <button title="Delete toolpath"><svg viewBox="0 0 26 24"><use href="#code" width="26" height="24"/><path d="M6 8l15 15M21 8L6 23" stroke="#d01515" stroke-width="2.500"/></svg></button>
          <button title="Calculate toolpaths"><svg viewBox="0 0 26 24"><use href="#code" width="26" height="24"/><path d="M10 8h11v15H10z" fill="#999" stroke="#555"/><path d="M12 10h7v3h-7z" fill="#222"/><path d="M12 16h7M12 19h7M12 22h7" stroke="#eee" stroke-width="2" stroke-dasharray="2 1"/></svg></button>
        </div>
        <div class="ops">
          <button title="Tool database"><svg viewBox="0 0 26 24"><path d="M1 1h4v13l-1 9H2L1 14zM11 1h4v13l3 2-5 6-5-6 3-2zM20 1h4v13l1 3-3 6-3-6 1-3z" fill="#a9adb0" stroke="#777"/><path d="M2 16l3 3M2 12l3 3" stroke="#555"/></svg></button>
          <button title="Open toolpaths"><svg viewBox="0 0 26 24"><use href="#moves" width="26" height="20"/><path d="M3 13h7l2 2h9v8H3z" fill="#e8c413" stroke="#a88b08"/></svg></button>
          <button title="Save template"><svg viewBox="0 0 26 24"><use href="#moves" width="26" height="22"/><use href="#disk" x="7" y="11" width="13" height="13"/></svg></button>
          <button title="Save visible"><svg viewBox="0 0 26 24"><use href="#moves" width="26" height="22"/><use href="#disk" x="7" y="11" width="13" height="13"/><circle cx="12" cy="5" r="4" fill="#ffe53b" stroke="#c7a800"/></svg></button>
          <button title="Toolpath tiling"><svg viewBox="0 0 26 24"><path d="M1 23V4h5v19h5V4M16 23V16M16 23h5V10" stroke="#8a96ea" stroke-width="1.500"/><path d="M13 12V1h5v11M18 1h5v11" stroke="#1313b8" stroke-width="1.500"/><path d="M10 4v10h13" stroke="#222" stroke-dasharray="2 1"/></svg></button>
        </div>
        <div class="ops last">
          <button title="Preview"><svg viewBox="0 0 26 24"><path d="M2 13l4-10h5v10h6l5 3-3 6-17-2z" fill="#c79a7a" stroke="#805a43"/><path d="M12 0h4v12h-4z" fill="#bbb" stroke="#666"/><circle cx="14" cy="16" r="5" fill="#d0a07c" stroke="#8d6349"/></svg></button>
          <button title="Estimate time"><svg viewBox="0 0 26 24"><use href="#code" width="26" height="24"/><circle cx="13" cy="14" r="8" fill="#fff" stroke="#d01515" stroke-width="2"/><path d="M13 9v5l5-1" stroke="#111" stroke-width="1.500"/></svg></button>
          <button title="Save toolpath"><svg viewBox="0 0 26 24"><use href="#code" width="26" height="24"/><use href="#disk" x="5" y="7" width="17" height="17"/></svg></button>
          <button title="Dock toolpaths"><svg viewBox="0 0 26 24"><path d="M1 0h23v23H1z" fill="#dfeafa" stroke="#6aa6e0"/><path d="M1 0h2v23H1zM8 0h1v23H8z" fill="#111"/><path d="M24 8h-6V4l-8 8 8 7v-4h6z" fill="url(#blue)" stroke="#2577d8"/></svg></button>
        </div>
      </div>
      <div class="panel list">
        <div class="listhead">
          <input type="checkbox" class="mixed" id="all"><label for="all">Toolpath List</label>
          <button class="hot" aria-label="Move up"><svg viewBox="0 0 16 20"><path d="M8 1l7 8h-4v10H5V9H1z" fill="#4aa0f2" stroke="#23366a" stroke-width="1.500"/></svg></button><button aria-label="Move down"><svg viewBox="0 0 16 20"><path d="M8 19l7-8h-4V1H5v10H1z" fill="#4aa0f2" stroke="#23366a" stroke-width="1.500"/></svg></button>
        </div>
        <ul>
          <li><input type="checkbox" id="t1"><svg><use href="#cutter"/></svg><label for="t1">Pocket 1</label></li>
          <li class="cur"><input type="checkbox" id="t2" checked><svg viewBox="0 0 10 14"><path d="M1 0v13h8V0" fill="#6fb0ee" stroke="#1a4e9a" stroke-width="1.500"/></svg><label for="t2">cut1</label></li>
          <li><input type="checkbox" id="t3"><svg><use href="#cutter"/></svg><label for="t3">cut2</label></li>
          <li><input type="checkbox" id="t4" checked><svg><use href="#cutter"/></svg><label for="t4">cut_</label></li>
        </ul>
        <div class="listfoot">
          <input type="checkbox" id="p2d" checked><label for="p2d">Show 2D previews</label>
          <input type="checkbox" id="solid"><label for="solid">Solid</label>
          <button aria-label="Preview options"><svg viewBox="0 0 10 14"><path d="M1 1h8v12H1zM1 7h8M3 4h4M3 10h4" fill="#fff" stroke="#000" stroke-width="1.200"/></svg></button>
        </div>
      </div>
    </aside>
  </main>
</div>
</body>
</html>
```
FILE: styles.css
```css
* { box-sizing: border-box; }
body { margin: 0; font: 11px/18px "Open Sans", "Noto Sans", sans-serif; color: #000; background: #f0f0f0; }
button { margin: 0; padding: 0; border: 0; background: none; font: inherit; color: inherit; }
h1, h2, h3, p, ul, dl, dd { margin: 0; padding: 0; }
.defs { position: absolute; width: 0; height: 0; }
.app { display: flex; flex-direction: column; height: 100vh; }

.titlebar {
  display: flex; align-items: flex-start; height: 22px; padding-left: 3px; border-bottom: 1px solid #555;
  background:
    radial-gradient(circle at 37px 24px, #fff 2px, transparent 12px),
    radial-gradient(circle at 114px 24px, #fff 2px, transparent 12px),
    radial-gradient(circle at 193px 22px, #fff 3px, transparent 13px),
    radial-gradient(circle at 266px 19px, #d3e6fb 2px, transparent 14px),
    radial-gradient(circle at 341px 21px, #fff 3px, transparent 13px),
    radial-gradient(circle at 416px 22px, #fff 3px, transparent 13px),
    radial-gradient(circle at 493px 18px, #eff 7px, transparent 14px),
    linear-gradient(90deg, #444 0, #777 30px, #777 440px, #0000 490px),
    linear-gradient(#060708, #000);
}
.logo { width: 12px; height: 16px; margin-top: 3px; }
.titlebar h1 { margin-left: 6px; font-size: 12px; font-weight: 400; line-height: 22px; }
.winctl { display: flex; margin-left: auto; margin-right: 2px; border: 1px solid #777; border-top: 0; border-radius: 0 0 4px 4px; background: linear-gradient(#444, #151515); }
.winctl button { width: 28px; height: 17px; border-right: 1px solid #666; }
.winctl .wide { width: 46px; border: 0; }
.winctl svg { width: 12px; height: 12px; }

.menubar { display: flex; align-items: center; height: 25px; padding: 0 4px; background: linear-gradient(90deg, #f0f0f0, #fcfcfc); border-top: 1px solid #fff; }
.menubar > button { padding: 0 9px 0 8px; }
.mdictl { display: flex; gap: 6px; margin-left: auto; margin-right: 2px; }
.mdictl button { width: 10px; height: 18px; }
.mdictl svg { display: block; width: 10px; height: 10px; margin-top: 3px; }

.work { display: flex; flex: 1; gap: 4px; min-height: 0; border-bottom: 2px solid #999; }
.side { display: flex; flex-direction: column; flex: none; }
.left { width: 245px; }
.right { width: 279px; }
.dock { display: flex; align-items: center; justify-content: space-between; height: 25px; flex: none; padding: 0 8px 0 14px; background: linear-gradient(90deg, #fdfdfd, #f4f4f4); position: relative; }
.dock::before { content: ""; position: absolute; left: 5px; top: 5px; height: 18px; border-left: 2px dotted #bbb; }
.pin { width: 8px; height: 10px; margin-bottom: 4px; }
.panel { background: #d7e5f2; }

.drawing { flex: 1; display: flex; flex-direction: column; padding: 7px 12px 0; }
h2 { flex: none; height: 18px; font-size: 11px; line-height: 18px; font-weight: 700; }
.drawing h2 { margin: 10px 0 0 3px; }
.drawing h2:first-child { margin: 0 0 3px 3px; }
.tools { display: flex; height: 28px; flex: none; }
.tools button { width: 30px; height: 28px; padding: 4px 5px; }
.tools svg { display: block; width: 20px; height: 20px; fill: none; filter: drop-shadow(1px 1px 1px #8a9ab066); }
.v svg { stroke: #23467e; stroke-width: 2; }
.t svg { stroke: #4c6690; stroke-width: 1; }
.node { fill: #f6e29a; stroke: #d29c12; stroke-width: 1; }
.pink { fill: #fff; stroke: #f3b5bb; }
.tee { font: 700 20px "Liberation Serif", serif; fill: #2b2b9c; stroke: none; text-anchor: middle; }
.ab { font: 700 8px "Liberation Sans", sans-serif; fill: #333; stroke: none; }
.layer { position: relative; display: flex; align-items: center; height: 28px; margin: 6px 0 -3px 3px; flex: none; }
.layer svg { width: 20px; height: 20px; }
.layer label { width: 46px; padding-left: 4px; font-weight: 700; }
.layer select {
  width: 133px; height: 21px; padding: 0 8px; font: 12px "DejaVu Sans Condensed", "DejaVu Sans", sans-serif; appearance: none;
  border: 1px solid #7c7c7c; border-radius: 3px; box-shadow: inset 0 0 0 1px #fff8;
  background: linear-gradient(#f2f2f2, #ddd 60%, #cfcfcf);
}
.layer::after { content: ""; position: absolute; left: 185px; top: 12px; border: 5px solid transparent; border-top: 6px solid #000; pointer-events: none; }
.job { margin: auto 0 11px; font: 700 14px/20px "Liberation Sans", Arial, sans-serif; color: #a0a9b3; }
.job dt { margin-left: -2px; }
.job dd { margin-left: 8px; }

.sidetabs { display: flex; height: 26px; flex: none; }
.sidetabs button { position: relative; height: 23px; }
.sidetabs .on { width: 64px; z-index: 1; }
.sidetabs .off { width: 54px; margin-left: -8px; }
.sidetabs svg { position: absolute; left: 0; top: 0; width: 100%; height: 100%; }
.sidetabs span { position: relative; display: block; padding-left: 6px; text-align: left; line-height: 20px; }

.doc { flex: 1; display: flex; flex-direction: column; min-width: 0; }
.tabs { display: flex; align-items: flex-end; height: 25px; flex: none; padding-left: 5px; background: linear-gradient(90deg, #f4f4f4, #fbfbfb); }
.tab { height: 19px; padding: 0 11px 0 10px; border: 1px solid #9a9a9a; border-bottom: 0; border-radius: 4px 4px 0 0; line-height: 18px; background: linear-gradient(#fff4d6, #fddc80); }
.active { display: flex; height: 20px; padding: 0; border: 0; font-weight: 700; background: none; }
.active svg { width: 26px; height: 20px; }
.active span { padding-right: 14px; border-top: 1px solid #9a9a9a; border-right: 1px solid #9a9a9a; border-radius: 0 3px 0 0; line-height: 19px; background: linear-gradient(#e0e9fb, #8eaae4); }
.tabnav { display: flex; gap: 4px; margin: 0 3px 0 auto; align-self: center; }
.tabnav button { height: 18px; }
.tabnav svg { display: block; width: 10px; height: 10px; margin-top: 3px; }
.frame {
  flex: 1; min-height: 0; display: grid; grid-template: 25px 1fr / 26px 1fr; padding: 4px 3px;
  border: 1px solid #8a8a8a; border-width: 1px 1px 0; background: #8ca8e2;
}
.corner { background: #f0f0f0; border-right: 2px solid #fff; }
.hruler, .vruler { width: 100%; height: 100%; overflow: hidden; background: #efefef; stroke: #000; shape-rendering: crispEdges; fill: none; }
.hruler { border: 1px solid #777; border-width: 1px 0 0 1px; }
.vruler { border: 1px solid #777; border-width: 1px 2px 0 1px; border-right-color: #000; }
.num { fill: #222; stroke: none; font: 12px "Liberation Sans", sans-serif; text-anchor: middle; }
.view { display: grid; grid-template: minmax(0, 1fr) 16px / minmax(0, 1fr) 16px; border-top: 1px solid #000; background: #dcdcdc; min-height: 0; }
.canvas { width: 100%; height: 100%; overflow: hidden; fill: none; shape-rendering: crispEdges; }
.ink { stroke: #000; }
.cut { stroke: #c49090; }
.sel { stroke: #f0f; }
.vscroll, .hscroll { display: flex; align-items: center; justify-content: space-between; background: #f0f0f0; }
.vscroll { flex-direction: column; border-left: 1px solid #e2e2e2; }
.hscroll { border-top: 1px solid #e2e2e2; }
.vscroll b { width: 15px; height: 48px; margin-top: 228px; border: 1px solid #999; border-radius: 2px; background: repeating-linear-gradient(#666 0 1px, transparent 1px 3px) center / 7px 7px no-repeat, linear-gradient(90deg, #f5f5f5, #d0d0d0); }
.hscroll b { width: 108px; height: 15px; margin-right: 361px; border: 1px solid #999; border-radius: 2px; background: repeating-linear-gradient(90deg, #666 0 1px, transparent 1px 3px) center / 7px 7px no-repeat, linear-gradient(#f5f5f5, #d0d0d0); }
.vscroll i, .hscroll i { border: 3px solid transparent; }
.vscroll .up { margin-top: 3px; border-bottom-color: #333; }
.vscroll .down { margin-bottom: 4px; border-top-color: #333; }
.hscroll .back { margin-left: 4px; border-right-color: #333; }
.hscroll .fwd { margin-right: 4px; border-left-color: #333; }
.grip { background: #efefef; }

.paths { height: 286px; flex: none; padding: 14px 0 0 16px; border-bottom: 1px solid #8ca2bd; }
.material { display: flex; height: 73px; color: #5c6670; font: 11px/13px "DejaVu Sans Condensed", "DejaVu Sans", sans-serif; }
.setup { display: grid; grid-template: 22px 32px 13px / 73px 106px; width: 180px; margin-top: 3px; height: 70px; border-right: 1px solid #999; }
.setup h3 { margin: 0 0 0 2px; white-space: nowrap; color: #000; font: 700 11px/14px "Open Sans", sans-serif; }
.diagram { grid-area: 1 / 2 / 3 / 3; width: 106px; height: 58px; margin-top: -3px; font-size: 11px; fill: #5c6670; }
.z { font-weight: 700; fill: #222; }
.set { grid-area: 2 / 1; width: 61px; height: 21px; margin: 3px 0 0 3px; border: 1px solid #2f8fcb; border-radius: 3px; box-shadow: inset 0 0 0 1px #48d2f7; color: #000; font-size: 12px; background: linear-gradient(#f4f8fa, #dbe6ee 50%, #c9d8e4); }
.home { grid-area: 3 / 1 / 4 / 3; margin: 4px 0 0 4px; white-space: nowrap; }
.home span { margin-left: 10px; }
.datum { padding-left: 9px; }
.datum svg { display: block; width: 52px; height: 30px; margin: 1px 0 4px; }
.datum .dark { padding-left: 3px; color: #111; height: 13px; line-height: 16px; }
.paths h2 { margin-top: 11px; margin-bottom: 1px; }
.paths h2 { padding-bottom: 0; }
.ops { display: flex; margin-left: -3px; height: 33px; }
.ops button { width: 35px; height: 33px; padding: 5px; }
.ops svg { display: block; width: 26px; height: 24px; fill: none; }
.gcode { font: 7px "Liberation Sans", sans-serif; fill: #777; stroke: none; }

.list { flex: 1; display: flex; flex-direction: column; margin-top: 4px; border-top: 1px solid #e8eef4; padding: 2px 9px; font: 13px/20px "Liberation Sans", Arial, sans-serif; }
.listhead, .listfoot { display: flex; align-items: center; flex: none; padding-left: 4px; }
.listhead { height: 30px; padding-right: 2px; border-bottom: 2px solid #949494; font-weight: 700; }
.listhead label { flex: 1; padding: 6px 0 0 8px; }
.list input { appearance: none; flex: none; width: 13px; height: 13px; margin: 0; padding: 1px; border: 1px solid #8e8f8f; background: linear-gradient(135deg, #ccd0d4, #fff) content-box; box-shadow: inset 0 0 0 1px #f4f4f4; }
.list input:checked::after { content: ""; display: block; width: 4px; height: 8px; margin: -1px 0 0 3px; border: solid #3f5699; border-width: 0 2px 2px 0; rotate: 40deg; }
.list .mixed { margin-top: 4px; background: linear-gradient(135deg, #4cc0e0, #0b5a86) content-box; }
.list button { width: 21px; height: 26px; border: 1px solid #777; border-radius: 3px; background: linear-gradient(#f2f2f2, #cfcfcf); margin-left: 2px; }
.list .hot { border-color: #3aa8d8; box-shadow: inset 0 0 0 1px #7adcf7; }
.list button svg { display: block; width: 15px; height: 19px; margin: 0 auto; }
.list ul { flex: 1; margin-top: 3px; list-style: none; }
.list li { display: flex; align-items: center; height: 20px; padding-left: 5px; }
.list li svg { width: 10px; height: 14px; margin: 0 5px 0 6px; fill: none; }
.cur { font-weight: 700; }
.listfoot { height: 30px; border-top: 2px solid #999; }
.listfoot label { padding-left: 4px; margin-right: 14px; }
.listfoot button { height: 22px; margin-left: auto; margin-right: 2px; }
.listfoot button svg { width: 10px; height: 14px; }
```
